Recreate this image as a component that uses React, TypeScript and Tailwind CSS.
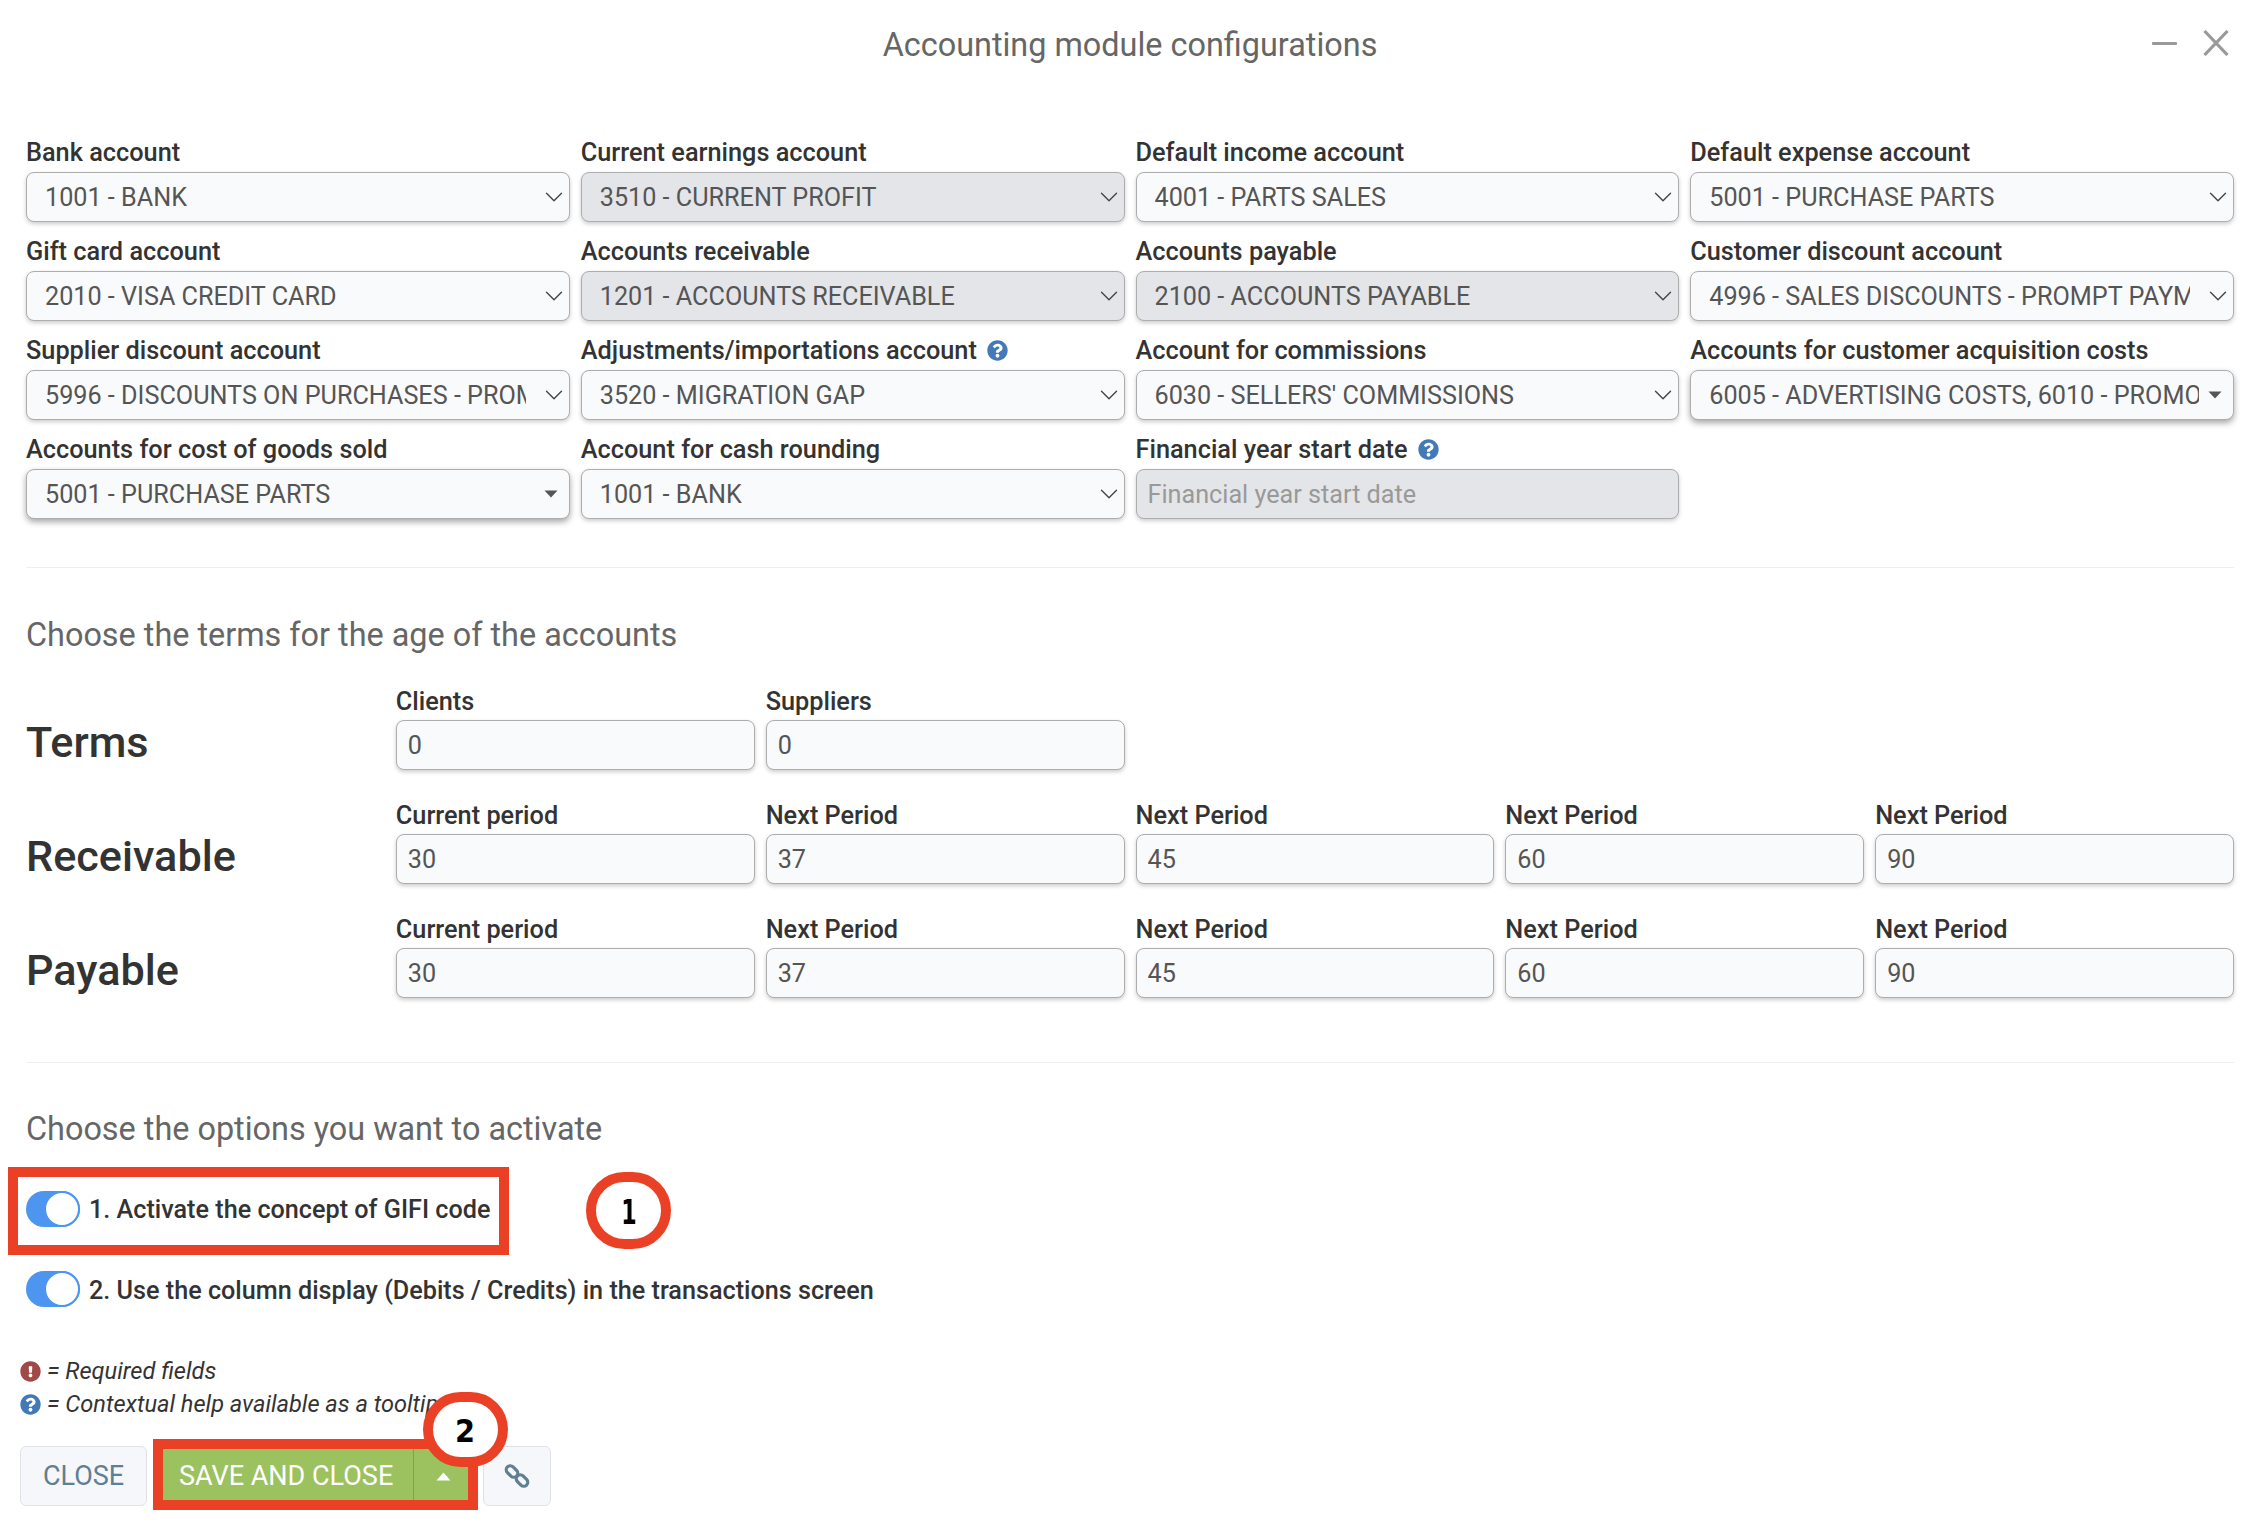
import React from "react";
import { FaQuestionCircle, FaExclamationCircle } from "react-icons/fa";

type Sel = { label: string; value?: string; disabled?: boolean; caret?: boolean; help?: boolean; placeholder?: string };

const rows: Sel[] = [
  { label: "Bank account", value: "1001 - BANK" },
  { label: "Current earnings account", value: "3510 - CURRENT PROFIT", disabled: true },
  { label: "Default income account", value: "4001 - PARTS SALES" },
  { label: "Default expense account", value: "5001 - PURCHASE PARTS" },
  { label: "Gift card account", value: "2010 - VISA CREDIT CARD" },
  { label: "Accounts receivable", value: "1201 - ACCOUNTS RECEIVABLE", disabled: true },
  { label: "Accounts payable", value: "2100 - ACCOUNTS PAYABLE", disabled: true },
  { label: "Customer discount account", value: "4996 - SALES DISCOUNTS - PROMPT PAYMENT" },
  { label: "Supplier discount account", value: "5996 - DISCOUNTS ON PURCHASES - PROMPT PAYMENT" },
  { label: "Adjustments/importations account", value: "3520 - MIGRATION GAP", help: true },
  { label: "Account for commissions", value: "6030 - SELLERS' COMMISSIONS" },
  { label: "Accounts for customer acquisition costs", value: "6005 - ADVERTISING COSTS, 6010 - PROMOTION", caret: true },
  { label: "Accounts for cost of goods sold", value: "5001 - PURCHASE PARTS", caret: true },
  { label: "Account for cash rounding", value: "1001 - BANK" },
  { label: "Financial year start date", placeholder: "Financial year start date", help: true, disabled: true },
];

function FieldLabel({ children, help }: { children: React.ReactNode; help?: boolean }) {
  return (
    <div className="h-[49px] flex items-end gap-[10px] pb-[4px] text-[25.3px] leading-[30px] font-medium text-[#333333] whitespace-nowrap">
      <span>{children}</span>
      {help && <FaQuestionCircle className="text-[#4479b8] w-[21px] h-[21px] mb-[5px]" />}
    </div>
  );
}

function Chevron() {
  return (
    <svg viewBox="0 0 16 16" className="w-[20px] h-[20px] shrink-0" fill="none" stroke="#444444" strokeWidth="1.1" strokeLinecap="round" strokeLinejoin="round">
      <path d="m2 5 6 6 6-6" />
    </svg>
  );
}

function Caret() {
  return (
    <svg viewBox="0 0 14 8" className="w-[14px] h-[8px] shrink-0" fill="#555555">
      <path d="M0.5 0.5 H13.5 L7 7.5 Z" />
    </svg>
  );
}

function SelectField({ f }: { f: Sel }) {
  const bg = f.disabled ? "bg-[#e3e5e9]" : "bg-[#f9fafc]";
  const shadow = f.caret ? "shadow-[0_3px_6px_rgba(0,0,0,0.35)]" : "shadow-[0_2px_4px_rgba(0,0,0,0.2)]";
  return (
    <div>
      <FieldLabel help={f.help}>{f.label}</FieldLabel>
      {f.placeholder ? (
        <input
          disabled
          placeholder={f.placeholder}
          className={`block w-full h-[50px] rounded-[8px] border border-[#adadad] ${bg} ${shadow} px-[11px] text-[25.2px] placeholder:text-[#999999] outline-none`}
        />
      ) : (
        <div className={`h-[50px] rounded-[8px] border border-[#adadad] ${bg} ${shadow} flex items-center pl-[18px] ${f.caret ? "pr-[11px]" : "pr-[5px]"} text-[25.2px] text-[#555555]`}>
          <span className="flex-1 min-w-0 overflow-hidden whitespace-nowrap pt-[2px]">{f.value}</span>
          {f.caret ? (
            <span className="ml-[9px] shrink-0 flex"><Caret /></span>
          ) : (
            <span className="ml-[18px] shrink-0 flex"><Chevron /></span>
          )}
        </div>
      )}
    </div>
  );
}

function NumField({ label, value }: { label: string; value: string }) {
  return (
    <div>
      <div className="h-[64px] flex items-end pb-[3px] text-[25.3px] leading-[30px] font-medium text-[#333333] whitespace-nowrap">{label}</div>
      <input
        readOnly
        value={value}
        className="block w-full h-[50px] rounded-[8px] border border-[#adadad] bg-[#f9fafc] shadow-[0_2px_4px_rgba(0,0,0,0.2)] px-[11px] text-[25.2px] text-[#555555] outline-none"
      />
    </div>
  );
}

function TermRow({ title, values }: { title: string; values: [string, string][] }) {
  return (
    <>
      <div className="h-[114px] flex items-end pb-[2px] text-[43.2px] leading-[50px] font-medium text-[#333333]">{title}</div>
      {values.map(([l, v], i) => (
        <NumField key={i} label={l} value={v} />
      ))}
    </>
  );
}

function Toggle() {
  return (
    <span className="relative inline-block w-[54px] h-[36px] rounded-full bg-[#4d96ef] shrink-0">
      <span className="absolute right-0 top-0 w-[36px] h-[36px] rounded-full bg-white border-2 border-[#4d96ef]" />
    </span>
  );
}

const periods: [string, string][] = [
  ["Current period", "30"],
  ["Next Period", "37"],
  ["Next Period", "45"],
  ["Next Period", "60"],
  ["Next Period", "90"],
];

export default function App() {
  return (
    <div className="relative w-[2260px] h-[1530px] overflow-hidden bg-white px-[26px] font-['Roboto',sans-serif]">
      <div className="h-[123px] pt-[23px] relative">
        <h1 className="text-center text-[32.4px] leading-[44px] font-normal text-[#666666]">Accounting module configurations</h1>
        <div className="absolute right-[5px] top-[30px] flex items-center gap-[26px]">
          <svg viewBox="0 0 25 3" className="w-[25px] h-[3px]"><rect width="25" height="3" rx="1" fill="#999999" /></svg>
          <svg viewBox="0 0 26 26" className="w-[26px] h-[26px]" stroke="#999999" strokeWidth="3.2" fill="none"><path d="M1.5 1 L24.5 25 M24.5 1 L1.5 25" /></svg>
        </div>
      </div>

      <div className="grid grid-cols-4 gap-x-[11px]">
        {rows.map((f, i) => (
          <SelectField key={i} f={f} />
        ))}
      </div>

      <div className="mt-[48px] border-t border-[#eeeeee]" />
      <h2 className="pt-[47px] h-[88px] text-[32.4px] leading-[40px] font-normal text-[#666666]">Choose the terms for the age of the accounts</h2>

      <div className="grid grid-cols-6 gap-x-[11px]">
        <TermRow title="Terms" values={[["Clients", "0"], ["Suppliers", "0"]]} />
        <div className="col-span-3" />
        <TermRow title="Receivable" values={periods} />
        <TermRow title="Payable" values={periods} />
      </div>

      <div className="mt-[64px] border-t border-[#eeeeee]" />
      <h2 className="pt-[46px] text-[32.4px] leading-[40px] font-normal text-[#666666]">Choose the options you want to activate</h2>

      <div className="mt-[42px] flex items-center gap-[9px] h-[36px] text-[25.2px] font-medium text-[#333333]">
        <Toggle />
        <span className="pt-[2px]">1. Activate the concept of GIFI code</span>
      </div>
      <div className="mt-[44px] flex items-center gap-[9px] h-[36px] text-[25.2px] font-medium text-[#333333]">
        <Toggle />
        <span className="pt-[4px]">2. Use the column display (Debits / Credits) in the transactions screen</span>
      </div>

      <div className="mt-[48px] -ml-[6px] text-[23.6px] leading-[33px] italic text-[#333333]">
        <div className="flex items-center gap-[6px]">
          <FaExclamationCircle className="w-[21px] h-[21px] text-[#a04a47]" />
          <span>= Required fields</span>
        </div>
        <div className="flex items-center gap-[6px]">
          <FaQuestionCircle className="w-[21px] h-[21px] text-[#4479b8]" />
          <span>= Contextual help available as a tooltip</span>
        </div>
      </div>

      <div className="mt-[25px] -ml-[6px] flex items-stretch h-[60px]">
        <button className="w-[127px] rounded-[6px] border border-[#dfe3e8] bg-[#f5f7fa] text-[27px] text-[#5f7f92]">CLOSE</button>
        <div className="ml-[6px] w-[325px] flex bg-[#9bc25f] text-white">
          <span className="w-[261px] flex items-center pl-[26px] text-[27px] whitespace-nowrap border-r border-[#6fa85a]">SAVE AND CLOSE</span>
          <span className="flex-1 flex items-start pt-[26px] pl-[22px]">
            <svg viewBox="0 0 15 9" className="w-[15px] h-[9px]" fill="#ffffff"><path d="M7.5 0.5 L14.5 8.5 H0.5 Z" /></svg>
          </span>
        </div>
        <button className="ml-[5px] w-[68px] rounded-[6px] border border-[#dfe3e8] bg-[#f5f7fa] flex items-center justify-center">
          <svg viewBox="0 0 26 26" className="w-[26px] h-[26px]" fill="none" stroke="#5f7f92" strokeWidth="3.2">
            <rect x="1.5" y="4.5" width="13" height="8" rx="4" transform="rotate(45 8 8.5)" />
            <rect x="11.5" y="13.5" width="13" height="8" rx="4" transform="rotate(45 18 17.5)" />
          </svg>
        </button>
      </div>

      {/* annotations laid over the screenshot */}
      <div className="absolute left-[8px] top-[1167px] w-[501px] h-[88px] border-[10px] border-[#ea4025]" />
      <div className="absolute left-[586px] top-[1172px] w-[85px] h-[77px] rounded-full border-[10px] border-[#ea4025] bg-white flex items-center justify-center pt-[3px] font-['DejaVu_Sans',sans-serif] text-[34px] font-bold text-black">
        <span className="inline-block scale-x-[0.65]">1</span>
      </div>
      <div className="absolute left-[153px] top-[1439px] w-[325px] h-[71px] border-[10px] border-[#ea4025]" />
      <div className="absolute left-[423px] top-[1392px] w-[85px] h-[75px] rounded-full border-[10px] border-[#ea4025] bg-white flex items-center justify-center pt-[3px] font-['DejaVu_Sans',sans-serif] text-[32px] font-bold text-black">
        <span className="inline-block scale-x-[0.9]">2</span>
      </div>
    </div>
  );
}
